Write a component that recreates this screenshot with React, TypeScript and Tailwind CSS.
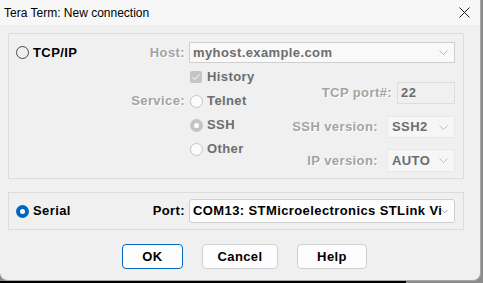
import React from 'react';

const font = { fontFamily: '"Liberation Sans", Arial, sans-serif' };

type RadioKind = 'off' | 'on' | 'disOff' | 'disOn';

const Radio: React.FC<{ kind: RadioKind }> = ({ kind }) => {
  if (kind === 'on') {
    return (
      <span className="w-[13px] h-[13px] rounded-full bg-[#0067c0] flex items-center justify-center shrink-0">
        <span className="w-[5px] h-[5px] rounded-full bg-white" />
      </span>
    );
  }
  if (kind === 'disOn') {
    return (
      <span className="w-[13px] h-[13px] rounded-full bg-[#c4c4c4] flex items-center justify-center shrink-0">
        <span className="w-[5px] h-[5px] rounded-full bg-white" />
      </span>
    );
  }
  if (kind === 'disOff') {
    return <span className="w-[13px] h-[13px] rounded-full border border-[#c4c4c4] bg-[#fbfbfb] shrink-0" />;
  }
  return <span className="w-[13px] h-[13px] rounded-full border border-[#4a4a4a] shrink-0" />;
};

const Chevron: React.FC<{ color: string }> = ({ color }) => (
  <svg width="9" height="5" viewBox="0 0 9 5">
    <path d="M0.5 0.5 L4.5 4.5 L8.5 0.5" fill="none" stroke={color} strokeWidth="1" />
  </svg>
);

const DisLabel: React.FC<{ children: React.ReactNode }> = ({ children }) => (
  <span className="text-[#a3a3a3] [text-shadow:1px_1px_0_#ffffff]">{children}</span>
);

export default function App() {
  return (
    <div className="w-[483px] h-[283px] bg-[#8c8c8c] flex flex-col overflow-hidden" style={font}>
      <div className="w-[481px] h-[281px] bg-[#f0f0f0] rounded-b-[8px] border-r border-b border-[#a8a8a8] flex flex-col overflow-hidden">
        {/* Title bar */}
        <div className="h-[25px] bg-[#f7f7f7] flex items-center justify-between pl-[4px] pr-[10px]">
          <span className="text-[12px] text-black">Tera Term: New connection</span>
          <svg width="11" height="11" viewBox="0 0 11 11">
            <path d="M0.5 0.5 L10.5 10.5 M10.5 0.5 L0.5 10.5" stroke="#1a1a1a" strokeWidth="1" />
          </svg>
        </div>

        <div className="flex-1 px-[8px] pt-[8px] text-[13px] font-bold tracking-[0.4px]">
          {/* TCP/IP group */}
          <div className="w-[456px] h-[146px] border border-[#dcdcdc] pt-[8px] flex flex-col">
            <div className="h-[21px] flex items-center">
              <div className="w-[176px] flex items-center justify-between pl-[7px]">
                <span className="flex items-center gap-[4px] text-black">
                  <Radio kind="off" />
                  TCP/IP
                </span>
                <DisLabel>Host:</DisLabel>
              </div>
              <div className="ml-[4px] w-[266px] h-[21px] border border-[#cfcfcf] bg-[#f9f9f9] flex items-center justify-between pl-[3px] pr-[6px]">
                <span className="text-[#6d6d6d]">myhost.example.com</span>
                <Chevron color="#b8b8b8" />
              </div>
            </div>
            <div className="flex mt-[2px]">
              <div className="w-[176px] flex flex-col items-end pt-[24px]">
                <div className="h-[24px] flex items-center">
                  <DisLabel>Service:</DisLabel>
                </div>
              </div>
              <div className="ml-[5px] w-[80px] flex flex-col text-[#6d6d6d]">
                <div className="h-[24px] flex items-center gap-[5px]">
                  <span className="w-[12px] h-[12px] rounded-[2px] bg-[#c4c4c4] flex items-center justify-center">
                    <svg width="8" height="6" viewBox="0 0 8 6">
                      <path d="M0.5 3 L3 5.5 L7.5 0.5" fill="none" stroke="#ffffff" strokeWidth="1" />
                    </svg>
                  </span>
                  History
                </div>
                <div className="h-[24px] flex items-center gap-[4px]">
                  <Radio kind="disOff" />
                  Telnet
                </div>
                <div className="h-[24px] flex items-center gap-[4px]">
                  <Radio kind="disOn" />
                  SSH
                </div>
                <div className="h-[24px] flex items-center gap-[4px]">
                  <Radio kind="disOff" />
                  Other
                </div>
              </div>
              <div className="flex-1 flex flex-col items-end pr-[8px] pt-[17px]">
                <div className="h-[22px] flex items-center gap-[5px]">
                  <DisLabel>TCP port#:</DisLabel>
                  <div className="w-[58px] h-[22px] border border-[#dedede] bg-[#f0f0f0] flex items-center pl-[3px] text-[#6d6d6d]">
                    22
                  </div>
                </div>
                <div className="mt-[12px] h-[22px] flex items-center gap-[9px]">
                  <DisLabel>SSH version:</DisLabel>
                  <div className="w-[68px] h-[22px] border border-[#e8e8e8] bg-[#f6f6f6] flex items-center justify-between pl-[4px] pr-[6px] text-[#6d6d6d]">
                    SSH2
                    <Chevron color="#c0c0c0" />
                  </div>
                </div>
                <div className="mt-[11px] h-[23px] flex items-center gap-[9px]">
                  <DisLabel>IP version:</DisLabel>
                  <div className="w-[68px] h-[23px] border border-[#e8e8e8] bg-[#f6f6f6] flex items-center justify-between pl-[4px] pr-[6px] text-[#6d6d6d]">
                    AUTO
                    <Chevron color="#c0c0c0" />
                  </div>
                </div>
              </div>
            </div>
          </div>

          {/* Serial group */}
          <div className="mt-[13px] w-[456px] h-[38px] border border-[#dcdcdc] flex items-center">
            <div className="w-[176px] flex items-center justify-between pl-[7px] text-black">
              <span className="flex items-center gap-[4px]">
                <Radio kind="on" />
                Serial
              </span>
              <span>Port:</span>
            </div>
            <div className="ml-[4px] w-[266px] h-[24px] rounded-[3px] border border-[#cfcfcf] bg-[#fdfdfd] flex items-center justify-between pl-[3px] pr-[6px]">
              <span className="text-black whitespace-nowrap">COM13: STMicroelectronics STLink Vi</span>
              <Chevron color="#6a6a6a" />
            </div>
          </div>

          {/* Buttons */}
          <div className="mt-[14px] ml-[114px] flex gap-[19px] text-black">
            <button className="w-[61px] h-[25px] rounded-[4px] border border-[#0067c0] bg-[#fdfdfd] font-bold">OK</button>
            <button className="w-[76px] h-[25px] rounded-[4px] border border-[#d0d0d0] bg-[#fdfdfd] font-bold">Cancel</button>
            <button className="w-[70px] h-[25px] rounded-[4px] border border-[#d0d0d0] bg-[#fdfdfd] font-bold">Help</button>
          </div>
        </div>
      </div>
      <div className="h-[2px] w-[406px] bg-black" />
    </div>
  );
}
